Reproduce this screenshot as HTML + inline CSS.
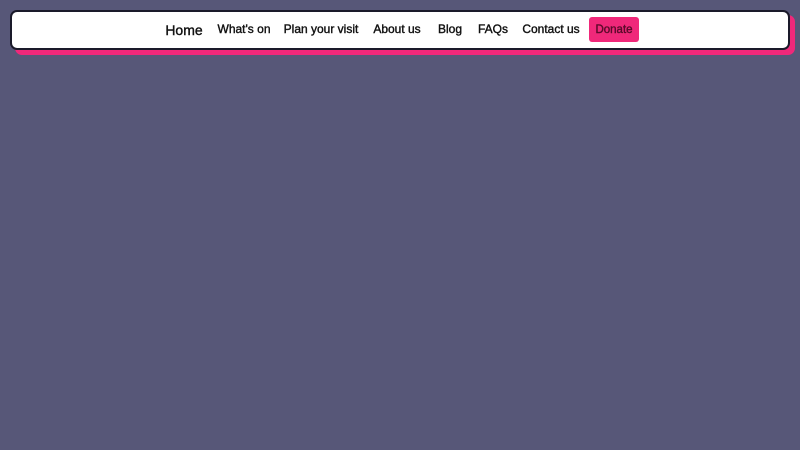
<!DOCTYPE html>
<html><head><style>
body{margin:0;width:800px;height:450px;background:#575778;font-family:"Liberation Sans",sans-serif;position:relative;overflow:hidden}
.nav{position:absolute;left:10px;top:10px;width:776px;height:36px;background:#fff;border:2px solid #1a1a2a;border-radius:7px;box-shadow:5px 5px 0 #f0287a}
.t{position:absolute;top:29px;transform:translate(-50%,-50%);color:#111;font-size:12px;-webkit-text-stroke:0.4px #111;white-space:nowrap}
.don{position:absolute;left:589px;top:17px;width:50px;height:25px;background:#f0287a;border-radius:3px;color:#5a0a2a;font-size:11.5px;-webkit-text-stroke:0.4px #5a0a2a;line-height:25px;text-align:center}
</style></head><body>
<div class="nav"></div>
<span class="t" style="left:184px;font-size:14px;top:30px">Home</span>
<span class="t" style="left:244px">What's on</span>
<span class="t" style="left:321px">Plan your visit</span>
<span class="t" style="left:397px">About us</span>
<span class="t" style="left:450px">Blog</span>
<span class="t" style="left:493px">FAQs</span>
<span class="t" style="left:551px">Contact us</span>
<div class="don"><span style="position:relative;top:1px">Donate</span></div>
</body></html>
